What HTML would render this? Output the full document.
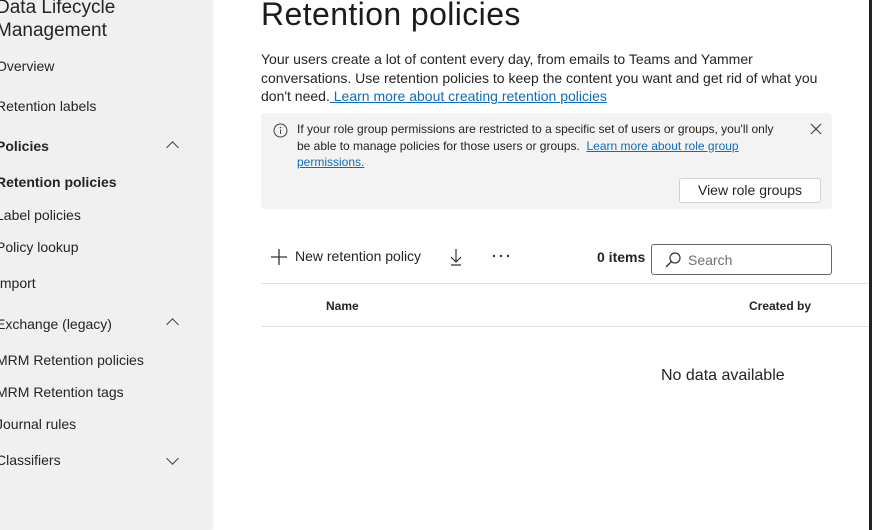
<!DOCTYPE html>
<html><head><style>
body{margin:0;width:872px;height:530px;overflow:hidden;background:#fff;font-family:"Liberation Sans",sans-serif;color:#242424;position:relative}
.side{position:absolute;left:0;top:0;width:211px;height:530px;background:#f0f0f0;box-shadow:1px 0 3px rgba(0,0,0,.12)}
.a{position:absolute;white-space:nowrap}
.si{position:absolute;left:-4px;font-size:14px;color:#242424}
.chev{position:absolute;left:168px;width:8px;height:8px;border-left:1.5px solid #444;border-top:1.5px solid #444}
.up{transform:rotate(45deg)}
.dn{transform:rotate(225deg)}
a{color:#0f6cbd}
</style></head><body>
<div class="side">
<div class="a" style="left:-4px;top:-4px;font-size:19px;line-height:23px">Data Lifecycle<br>Management</div>
<div class="si" style="top:58px">Overview</div>
<div class="si" style="top:98px">Retention labels</div>
<div class="si" style="top:138px;font-weight:bold">Policies</div>
<div class="chev up" style="top:143px"></div>
<div class="si" style="top:174px;font-weight:bold">Retention policies</div>
<div class="si" style="top:207px">Label policies</div>
<div class="si" style="top:239px">Policy lookup</div>
<div class="si" style="top:275px">Import</div>
<div class="si" style="top:316px">Exchange (legacy)</div>
<div class="chev up" style="top:320px"></div>
<div class="si" style="top:352px">MRM Retention policies</div>
<div class="si" style="top:384px">MRM Retention tags</div>
<div class="si" style="top:416px">Journal rules</div>
<div class="si" style="top:452px">Classifiers</div>
<div class="chev dn" style="top:454px"></div>
</div>
<div class="a" style="left:261px;top:-6px;font-size:32px;line-height:40px;color:#1b1b1b;letter-spacing:0.4px">Retention policies</div>
<div class="a" style="left:261px;top:50px;font-size:14px;line-height:18.5px;white-space:normal;width:580px">Your users create a lot of content every day, from emails to Teams and Yammer conversations. Use retention policies to keep the content you want and get rid of what you don't need.<a href="#"> Learn more about creating retention policies</a></div>
<div style="position:absolute;left:261px;top:113px;width:571px;height:96px;background:#f3f3f3;border-radius:4px"></div>
<svg class="a" style="left:273px;top:123px" width="15" height="15"><circle cx="7.5" cy="7.5" r="6.5" fill="none" stroke="#444" stroke-width="1"/><line x1="7.5" y1="6.5" x2="7.5" y2="11" stroke="#444"/><circle cx="7.5" cy="4.5" r=".8" fill="#444"/></svg>
<div class="a" style="left:297px;top:121px;font-size:12px;line-height:16.5px;white-space:normal;width:485px">If your role group permissions are restricted to a specific set of users or groups, you'll only be able to manage policies for those users or groups. &nbsp;<a href="#">Learn more about role group permissions.</a></div>
<svg class="a" style="left:810px;top:123px" width="12" height="12"><path d="M1 1L11 11M11 1L1 11" stroke="#444" stroke-width="1.2"/></svg>
<div class="a" style="left:679px;top:178px;width:140px;height:23px;background:#fff;border:1px solid #d1d1d1;border-radius:3px;font-size:14px;text-align:center;line-height:23px">View role groups</div>
<svg class="a" style="left:270px;top:248px" width="18" height="18"><path d="M9 1V17M1 9H17" stroke="#333" stroke-width="1.3"/></svg>
<div class="a" style="left:295px;top:248px;font-size:14px">New retention policy</div>
<svg class="a" style="left:449px;top:248px" width="14" height="18"><path d="M7 1V14M2 9L7 14L12 9M2 17H12" stroke="#333" stroke-width="1.2" fill="none"/></svg>
<svg class="a" style="left:492px;top:254px" width="20" height="4"><circle cx="2" cy="2" r="1.2" fill="#333"/><circle cx="9" cy="2" r="1.2" fill="#333"/><circle cx="16" cy="2" r="1.2" fill="#333"/></svg>
<div class="a" style="left:597px;top:249px;font-size:14px;font-weight:bold">0 items</div>
<div class="a" style="left:651px;top:244px;width:179px;height:29px;border:1px solid #666;border-radius:3px"></div>
<svg class="a" style="left:664px;top:251px" width="18" height="18"><circle cx="11" cy="7" r="5" fill="none" stroke="#333" stroke-width="1.2"/><path d="M7.5 10.5L2 16" stroke="#333" stroke-width="1.3"/></svg>
<div class="a" style="left:688px;top:252px;font-size:14px;color:#707070">Search</div>
<div class="a" style="left:261px;top:283px;width:611px;height:1px;background:#e0e0e0"></div>
<div class="a" style="left:326px;top:299px;font-size:12px;font-weight:bold">Name</div>
<div class="a" style="left:749px;top:299px;font-size:12px;font-weight:bold">Created by</div>
<div class="a" style="left:261px;top:326px;width:611px;height:1px;background:#e0e0e0"></div>
<div class="a" style="left:661px;top:367px;font-size:16px">No data available</div>
<div class="a" style="left:869px;top:0;width:3px;height:530px;background:#222"></div>
</body></html>
